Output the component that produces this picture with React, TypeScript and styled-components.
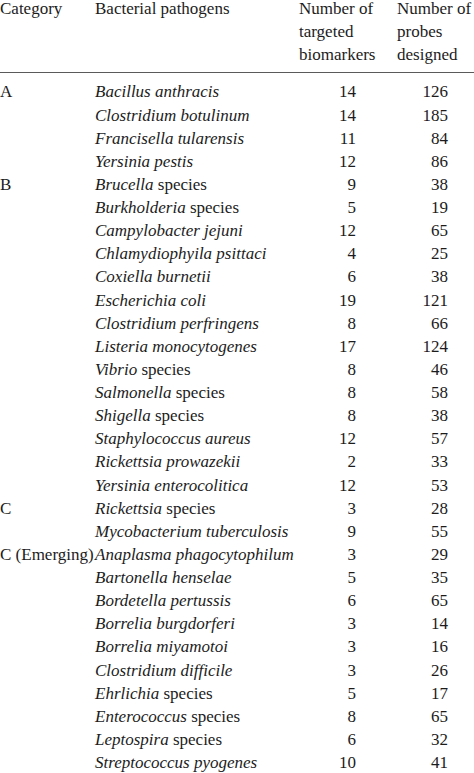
import React from 'react'
import styled, { createGlobalStyle } from 'styled-components'

type Row = {
  category?: string
  genus: string
  rest?: string
  biomarkers: number
  probes: number
}

const rows: Row[] = [
  { category: 'A', genus: 'Bacillus anthracis', biomarkers: 14, probes: 126 },
  { genus: 'Clostridium botulinum', biomarkers: 14, probes: 185 },
  { genus: 'Francisella tularensis', biomarkers: 11, probes: 84 },
  { genus: 'Yersinia pestis', biomarkers: 12, probes: 86 },
  { category: 'B', genus: 'Brucella', rest: 'species', biomarkers: 9, probes: 38 },
  { genus: 'Burkholderia', rest: 'species', biomarkers: 5, probes: 19 },
  { genus: 'Campylobacter jejuni', biomarkers: 12, probes: 65 },
  { genus: 'Chlamydiophyila psittaci', biomarkers: 4, probes: 25 },
  { genus: 'Coxiella burnetii', biomarkers: 6, probes: 38 },
  { genus: 'Escherichia coli', biomarkers: 19, probes: 121 },
  { genus: 'Clostridium perfringens', biomarkers: 8, probes: 66 },
  { genus: 'Listeria monocytogenes', biomarkers: 17, probes: 124 },
  { genus: 'Vibrio', rest: 'species', biomarkers: 8, probes: 46 },
  { genus: 'Salmonella', rest: 'species', biomarkers: 8, probes: 58 },
  { genus: 'Shigella', rest: 'species', biomarkers: 8, probes: 38 },
  { genus: 'Staphylococcus aureus', biomarkers: 12, probes: 57 },
  { genus: 'Rickettsia prowazekii', biomarkers: 2, probes: 33 },
  { genus: 'Yersinia enterocolitica', biomarkers: 12, probes: 53 },
  { category: 'C', genus: 'Rickettsia', rest: 'species', biomarkers: 3, probes: 28 },
  { genus: 'Mycobacterium tuberculosis', biomarkers: 9, probes: 55 },
  { category: 'C (Emerging)', genus: 'Anaplasma phagocytophilum', biomarkers: 3, probes: 29 },
  { genus: 'Bartonella henselae', biomarkers: 5, probes: 35 },
  { genus: 'Bordetella pertussis', biomarkers: 6, probes: 65 },
  { genus: 'Borrelia burgdorferi', biomarkers: 3, probes: 14 },
  { genus: 'Borrelia miyamotoi', biomarkers: 3, probes: 16 },
  { genus: 'Clostridium difficile', biomarkers: 3, probes: 26 },
  { genus: 'Ehrlichia', rest: 'species', biomarkers: 5, probes: 17 },
  { genus: 'Enterococcus', rest: 'species', biomarkers: 8, probes: 65 },
  { genus: 'Leptospira', rest: 'species', biomarkers: 6, probes: 32 },
  { genus: 'Streptococcus pyogenes', biomarkers: 10, probes: 41 },
]

const App = () => {
  return (
    <>
      <GlobalStyle />
      <Page>
        <Header>
          <HeadCell>Category</HeadCell>
          <HeadCell>Bacterial pathogens</HeadCell>
          <HeadCell>
            Number of
            <br />
            targeted
            <br />
            biomarkers
          </HeadCell>
          <HeadCell>
            Number of
            <br />
            probes
            <br />
            designed
          </HeadCell>
        </Header>
        <Body>
          {rows.map((r, i) => (
            <TableRow key={i}>
              <Cell>{r.category}</Cell>
              <Cell>
                <Species>{r.genus}</Species>
                {r.rest ? ' ' + r.rest : null}
              </Cell>
              <NumCell pad={41}>{r.biomarkers}</NumCell>
              <NumCell pad={26}>{r.probes}</NumCell>
            </TableRow>
          ))}
        </Body>
      </Page>
    </>
  )
}

export default App

const GlobalStyle = createGlobalStyle`
  html, body {
    margin: 0;
    padding: 0;
    background: #ffffff;
    overflow: hidden;
  }
`

const Page = styled.div`
  width: 474px;
  height: 773px;
  overflow: hidden;
  font-family: "Liberation Serif", "DejaVu Serif", serif;
  font-size: 17px;
  line-height: 23.14px;
  color: #1c1c1c;
`

const cols = '95px 204px 98px 77px'

const Header = styled.div`
  display: grid;
  grid-template-columns: ${cols};
  margin-top: -3px;
  padding-bottom: 6px;
  border-bottom: 1px solid #5a5a5a;
`

const HeadCell = styled.div`
  white-space: nowrap;
`

const Body = styled.div`
  padding-top: 7px;
`

const TableRow = styled.div`
  display: grid;
  grid-template-columns: ${cols};
  height: 23.14px;
`

const Cell = styled.div`
  white-space: nowrap;
`

const Species = styled.i`
  font-style: italic;
`

const NumCell = styled.div<{ pad: number }>`
  text-align: right;
  padding-right: ${({ pad }) => pad}px;
`
